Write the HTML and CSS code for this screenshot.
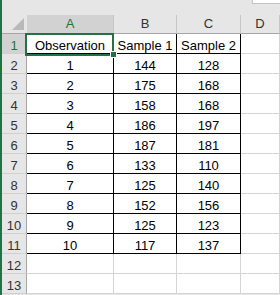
FILE: index.html
```html
<!DOCTYPE html>
<html lang="en">
<head>
  <meta charset="UTF-8">
  <title>Observations</title>
  <link rel="stylesheet" href="styles.css">
</head>
<body>
  <div class="topbar"><div class="fbox"></div></div>
  <div class="grid">
    <div class="hd corner">
      <svg width="13" height="13" viewBox="0 0 13 13"><polygon points="12,0 12,12 0,12" fill="#b9b9b9"/></svg>
    </div>
    <div class="hd on">A</div>
    <div class="hd">B</div>
    <div class="hd">C</div>
    <div class="hd">D</div>

    <div class="rn on">1</div><div class="c d">Observation</div><div class="c d">Sample 1</div><div class="c d">Sample 2</div><div class="c"></div>
    <div class="rn">2</div><div class="c d">1</div><div class="c d">144</div><div class="c d">128</div><div class="c"></div>
    <div class="rn">3</div><div class="c d">2</div><div class="c d">175</div><div class="c d">168</div><div class="c"></div>
    <div class="rn">4</div><div class="c d">3</div><div class="c d">158</div><div class="c d">168</div><div class="c"></div>
    <div class="rn">5</div><div class="c d">4</div><div class="c d">186</div><div class="c d">197</div><div class="c"></div>
    <div class="rn">6</div><div class="c d">5</div><div class="c d">187</div><div class="c d">181</div><div class="c"></div>
    <div class="rn">7</div><div class="c d">6</div><div class="c d">133</div><div class="c d">110</div><div class="c"></div>
    <div class="rn">8</div><div class="c d">7</div><div class="c d">125</div><div class="c d">140</div><div class="c"></div>
    <div class="rn">9</div><div class="c d">8</div><div class="c d">152</div><div class="c d">156</div><div class="c"></div>
    <div class="rn">10</div><div class="c d">9</div><div class="c d">125</div><div class="c d">123</div><div class="c"></div>
    <div class="rn">11</div><div class="c d">10</div><div class="c d">117</div><div class="c d">137</div><div class="c"></div>
    <div class="rn">12</div><div class="c"></div><div class="c"></div><div class="c"></div><div class="c"></div>
    <div class="rn">13</div><div class="c"></div><div class="c"></div><div class="c"></div><div class="c"></div>

    <div class="sel"></div>
    <div class="handle"></div>
  </div>
</body>
</html>
```

FILE: styles.css
```css
html, body {
  margin: 0;
  height: 100%;
  overflow: hidden;
}
body {
  font-family: "Liberation Sans", Arial, sans-serif;
  font-size: 13px;
  background: #e6e6e6;
  border-left: 2px solid #217346;
}
.topbar {
  height: 15px;
  display: flex;
  justify-content: flex-end;
}
.fbox {
  box-sizing: border-box;
  width: 28px;
  height: 4px;
  background: #fff;
  border-left: 1px solid #c6c6c6;
  border-bottom: 1px solid #c6c6c6;
}
.grid {
  position: relative;
  display: grid;
  grid-template-columns: 25px 87px 63px 64px 1fr;
  grid-template-rows: 19px;
  grid-auto-rows: 20px;
  background: #fff;
}
.grid > div {
  box-sizing: border-box;
}
.hd {
  background: #e6e6e6;
  color: #333;
  text-align: center;
  line-height: 18px;
  border-right: 1px solid #c6c6c6;
  border-bottom: 1px solid #a6a6a6;
}
.hd.on {
  background: #d2d2d2;
  color: #217346;
}
.corner {
  display: flex;
  align-items: flex-end;
  justify-content: flex-end;
  padding: 0 2px 2px 0;
  border-right: none;
}
.corner svg {
  display: block;
}
.rn {
  background: #e6e6e6;
  color: #333;
  text-align: center;
  line-height: 15px;
  padding-top: 4px;
  border-right: 1px solid #a6a6a6;
  border-bottom: 1px solid #d0d0d0;
}
.rn.on {
  background: #d2d2d2;
  color: #217346;
}
.c {
  color: #000;
  text-align: center;
  line-height: 15px;
  padding-top: 4px;
  white-space: nowrap;
  overflow: hidden;
  border-right: 1px solid #d4d4d4;
  border-bottom: 1px solid #d4d4d4;
}
.c.d {
  border-right-color: #000;
  border-bottom-color: #000;
}
.sel {
  position: absolute;
  left: 23px;
  top: 18px;
  width: 89px;
  height: 23px;
  border: 2px solid #217346;
}
.handle {
  position: absolute;
  left: 108px;
  top: 36px;
  width: 7px;
  height: 7px;
  background: #217346;
  border: 1px solid #fff;
}
```
